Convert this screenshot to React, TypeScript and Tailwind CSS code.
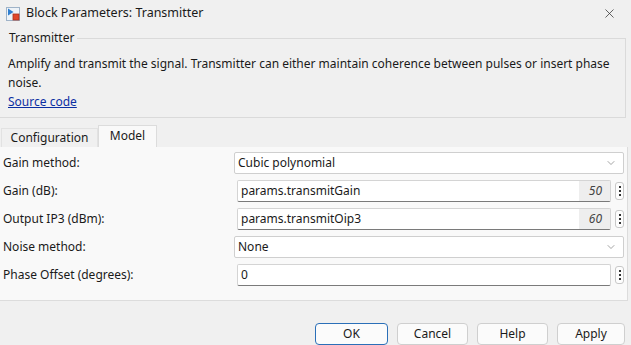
import { X, ChevronDown } from "lucide-react";

const font = "font-['Noto_Sans','Open_Sans',sans-serif]";

function BlockIcon() {
    return (
        <svg width="14" height="14" viewBox="0 0 14 14">
            <rect x="0.5" y="0.5" width="13" height="13" fill="#eef3f8" stroke="#9fb3c8" />
            <path d="M2 1.5 L7.5 5 L2 8.5 Z" fill="#2f7fd0" />
            <rect x="7" y="7" width="6" height="6" fill="#e0472a" stroke="#a8321c" strokeWidth="0.8" />
        </svg>
    );
}

function Dots() {
    return (
        <div className="flex h-[18px] w-[9px] flex-col items-center justify-center gap-[2px] rounded-[3px] border border-[#c8c8c8] bg-[#fdfdfd]">
            <span className="h-[2px] w-[2px] bg-[#333]" />
            <span className="h-[2px] w-[2px] bg-[#333]" />
            <span className="h-[2px] w-[2px] bg-[#333]" />
        </div>
    );
}

function Dropdown({ value }: { value: string }) {
    return (
        <div className="flex h-[22px] items-center justify-between rounded-[2px] border border-[#cfcfcf] bg-white pl-[3px] pr-[6px]">
            <span>{value}</span>
            <ChevronDown className="h-[12px] w-[12px] text-[#666]" strokeWidth={1.2} />
        </div>
    );
}

function EditField({ value, hint }: { value: string; hint?: string }) {
    return (
        <div className="flex items-center gap-[4px]">
            <div className="flex h-[22px] flex-1 items-center rounded-[2px] border border-[#d4d4d4] border-b-[#7a7a7a] bg-white pl-[3px]">
                <span className="flex-1">{value}</span>
                {hint && (
                    <span className="flex h-full w-[31px] items-center justify-end bg-[#eeeeee] pr-[8px] italic text-[#444]">
                        {hint}
                    </span>
                )}
            </div>
            <Dots />
        </div>
    );
}

const rows = [
    { label: "Gain method:", kind: "drop", value: "Cubic polynomial" },
    { label: "Gain (dB):", kind: "edit", value: "params.transmitGain", hint: "50" },
    { label: "Output IP3 (dBm):", kind: "edit", value: "params.transmitOip3", hint: "60" },
    { label: "Noise method:", kind: "drop", value: "None" },
    { label: "Phase Offset (degrees):", kind: "edit", value: "0" },
];

export default function App() {
    return (
        <div className={`flex h-[345px] w-[631px] flex-col bg-[#f0f0f0] text-[12px] text-[#1a1a1a] ${font}`}>
            {/* title bar */}
            <div className="flex h-[27px] items-center pl-[6px] pr-[14px] text-[12.5px]">
                <BlockIcon />
                <span className="ml-[6px] flex-1">Block Parameters: Transmitter</span>
                <X className="h-[15px] w-[15px] text-[#333]" strokeWidth={1.2} />
            </div>

            {/* description group */}
            <fieldset className="mr-[5px] mt-[2px] h-[89px] border border-l-0 border-[#dadada] pl-[8px] pr-[4px]">
                <legend className="-ml-[8px] pl-[9px] pr-[3px] leading-[18px]">Transmitter</legend>
                <p className="mt-[7px] leading-[19px]">
                    Amplify and transmit the signal. Transmitter can either maintain coherence between pulses or insert phase
                    noise.
                </p>
                <a className="mt-[1px] block leading-[18px] text-[#0b2fa3] underline">Source code</a>
            </fieldset>

            {/* tabs */}
            <div className="mt-[7px] flex h-[22px] items-end pl-[1px]">
                <div className="flex h-[19px] w-[97px] items-center justify-center border border-b-0 border-[#e2e2e2] bg-[#f0f0f0]">
                    Configuration
                </div>
                <div className="flex h-[22px] w-[59px] items-center justify-center border border-b-0 border-[#dcdcdc] bg-[#f9f9f9] pb-[2px]">
                    Model
                </div>
            </div>

            {/* panel */}
            <div className="mr-[3px] flex h-[154px] flex-col gap-[6px] border-b border-r border-[#dcdcdc] bg-[#f9f9f9] pl-[3px] pr-[3px] pt-[5px]">
                {rows.map((r) => (
                    <div key={r.label} className="grid grid-cols-[231px_1fr] items-center">
                        <span>{r.label}</span>
                        {r.kind === "drop" ? (
                            <Dropdown value={r.value} />
                        ) : (
                            <div className="pl-[3px]">
                                <EditField value={r.value} hint={r.hint} />
                            </div>
                        )}
                    </div>
                ))}
            </div>

            {/* buttons */}
            <div className="mt-[22px] flex justify-end gap-[9px] pr-[6px]">
                <button className="h-[22px] w-[73px] rounded-[4px] border border-[#2a6fb8] bg-[#fbfbfb]">OK</button>
                <button className="h-[22px] w-[71px] rounded-[4px] border border-[#cfcfcf] bg-[#fbfbfb]">Cancel</button>
                <button className="h-[22px] w-[71px] rounded-[4px] border border-[#cfcfcf] bg-[#fbfbfb]">Help</button>
                <button className="h-[22px] w-[68px] rounded-[4px] border border-[#cfcfcf] bg-[#fbfbfb]">Apply</button>
            </div>
        </div>
    );
}
